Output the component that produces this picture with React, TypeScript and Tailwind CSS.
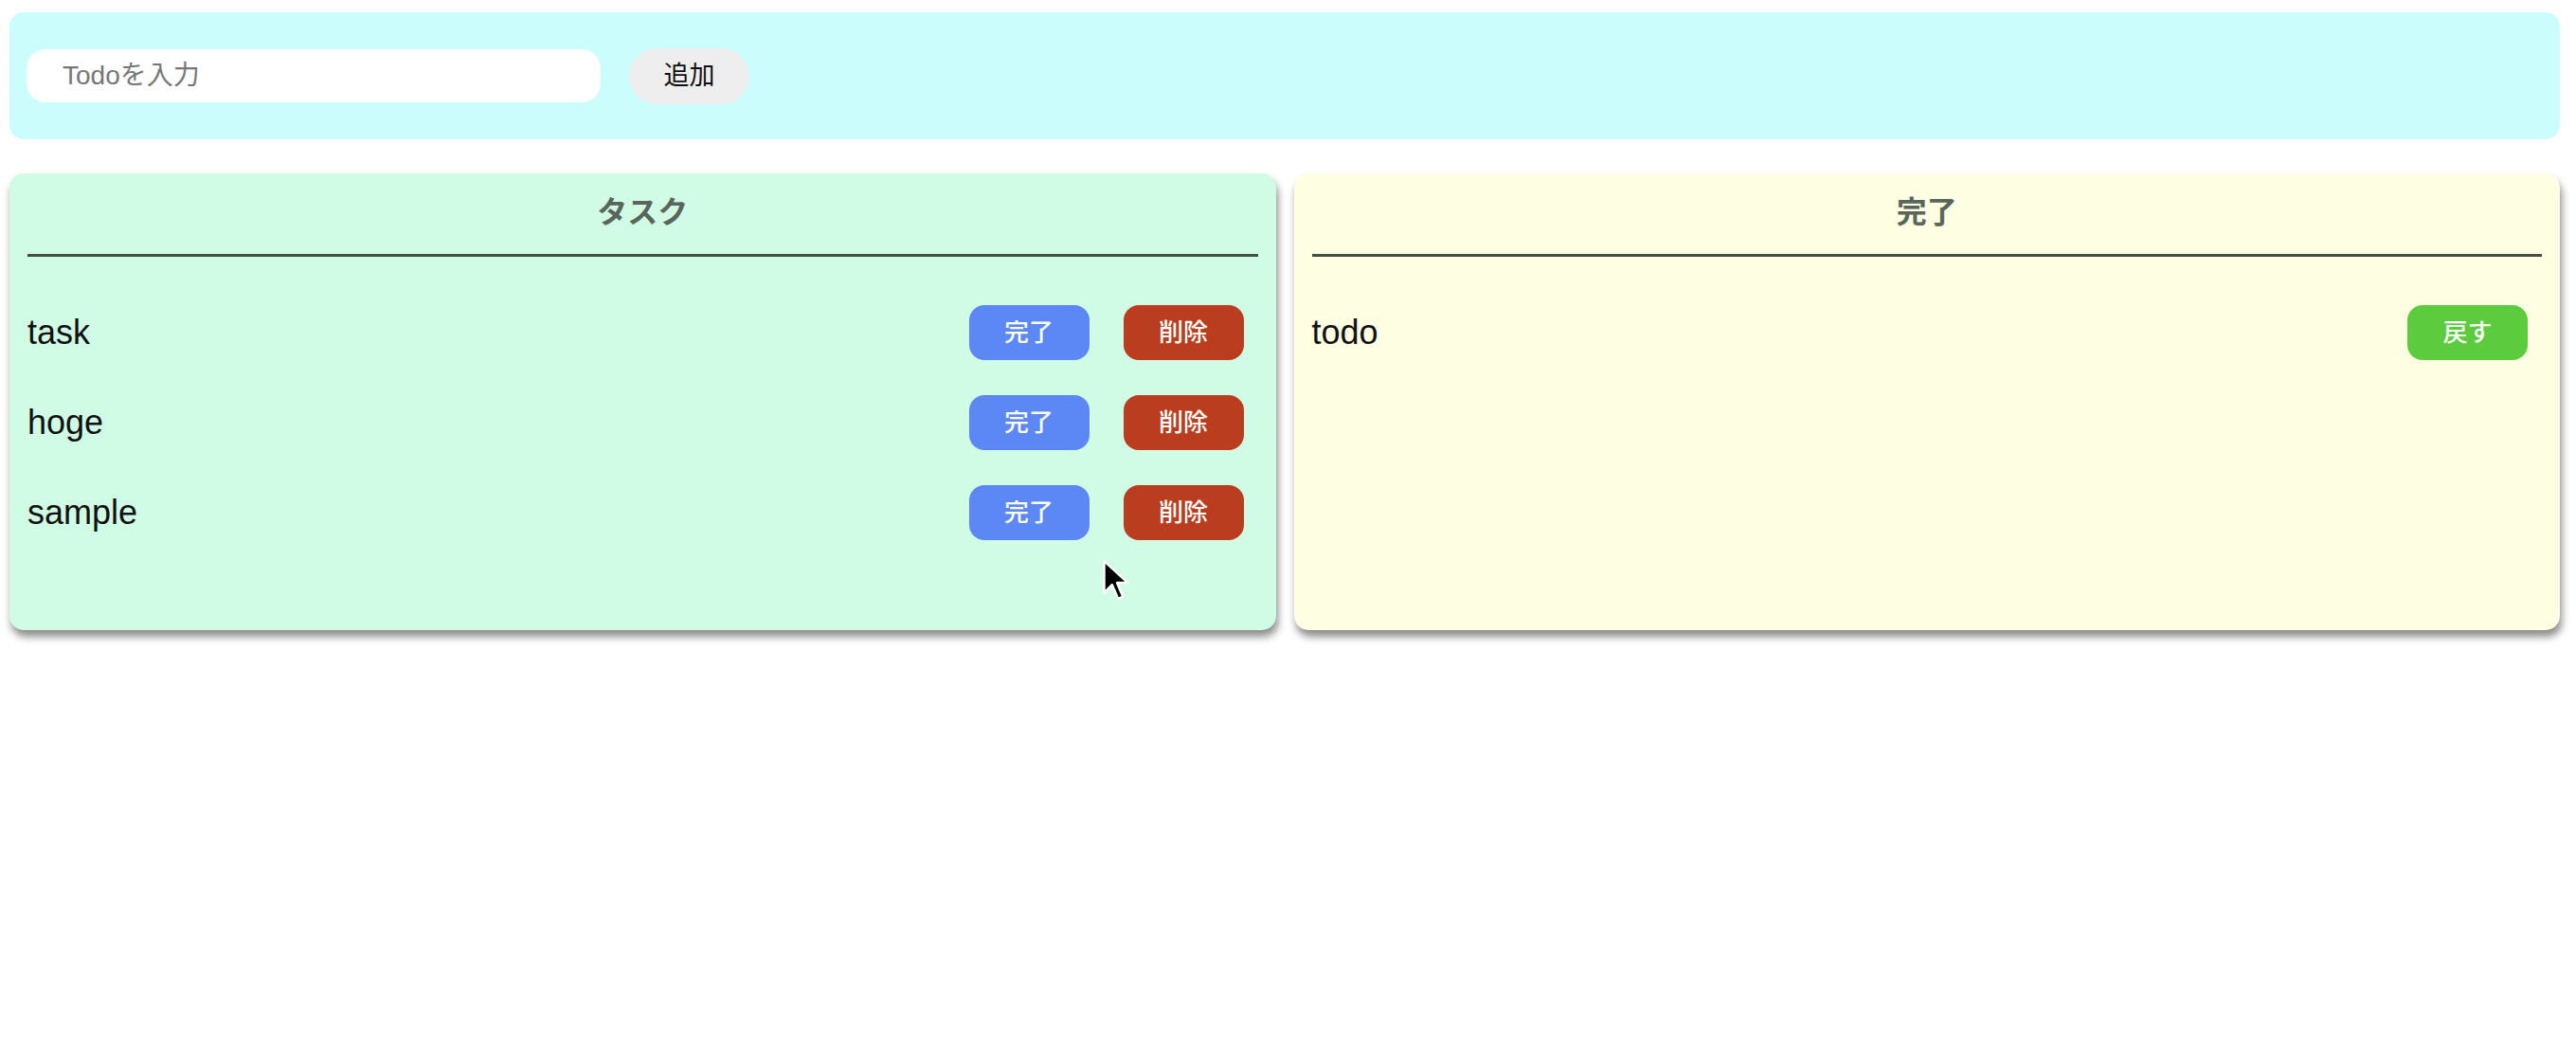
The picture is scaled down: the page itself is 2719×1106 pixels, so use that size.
import React from "react"

const font = { fontFamily: '"Liberation Sans", "Noto Sans CJK JP", sans-serif' }

const tasks = ["task", "hoge", "sample"]
const done = ["todo"]

const ActionButton = ({ label, color }: { label: string; color: string }) => (
    <button className={`w-[127px] h-[58px] rounded-[16px] text-white text-[26px] font-medium ${color}`}>
        {label}
    </button>
)

const Card = ({ title, bg, children }: { title: string; bg: string; children: React.ReactNode }) => (
    <div className={`flex-1 h-[482px] rounded-[15px] px-[19px] pt-[17px] shadow-[2px_7px_8px_rgba(0,0,0,0.45)] ${bg}`}>
        <h2 className="h-[48px] leading-[48px] text-center text-[32px] font-bold text-[#5a665b]">{title}</h2>
        <div className="mt-[20px] h-[3px] bg-[#454d45]" />
        <ul className="mt-[51px] flex flex-col gap-[37px] pr-[15px]">{children}</ul>
    </div>
)

const App = () => {
    return (
        <div className="relative w-[2719px] h-[1106px] bg-white" style={font}>
            <div className="w-[2692px] ml-[10px] pt-[13px]">
                <div className="h-[134px] bg-[#ccfdfd] rounded-[15px] flex items-center px-[18px] gap-[30px]">
                    <input
                        placeholder="Todoを入力"
                        className="w-[606px] h-[56px] rounded-[20px] bg-white pl-[38px] text-[28px] outline-none placeholder:text-[#777777]"
                    />
                    <button className="w-[127px] h-[59px] rounded-full bg-[#eeeeee] text-[27px] text-[#111]">追加</button>
                </div>

                <div className="mt-[36px] flex gap-[19px]">
                    <Card title="タスク" bg="bg-[#d0fbe4]">
                        {tasks.map(t => (
                            <li key={t} className="h-[58px] flex items-center">
                                <span className="flex-1 text-[36px] text-[#111]">{t}</span>
                                <div className="flex gap-[36px]">
                                    <ActionButton label="完了" color="bg-[#5b88f5]" />
                                    <ActionButton label="削除" color="bg-[#b93d1e]" />
                                </div>
                            </li>
                        ))}
                    </Card>
                    <Card title="完了" bg="bg-[#fefee3]">
                        {done.map(t => (
                            <li key={t} className="h-[58px] flex items-center">
                                <span className="flex-1 text-[36px] text-[#111]">{t}</span>
                                <ActionButton label="戻す" color="bg-[#5ccb3e]" />
                            </li>
                        ))}
                    </Card>
                </div>
            </div>

            {/* mouse cursor */}
            <svg className="absolute left-[1163px] top-[590px]" width="30" height="46" viewBox="0 0 14 22">
                <path d="M1 1 L1 17 L5 13 L8 20 L10.5 19 L7.5 12 L13 12 Z" fill="#000" stroke="#fff" strokeWidth="1.2" strokeLinejoin="round" />
            </svg>
        </div>
    )
}

export default App
